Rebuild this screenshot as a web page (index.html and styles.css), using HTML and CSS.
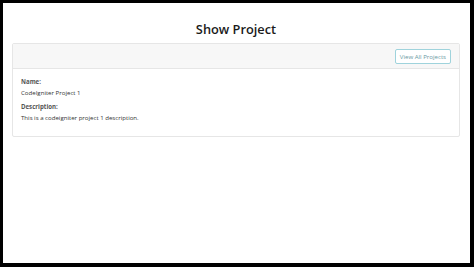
FILE: index.html
```html
<!DOCTYPE html>
<html>
<head>
<meta charset="utf-8">
<link rel="stylesheet" href="styles.css">
</head>
<body>
<div class="frame">
  <h2 class="title">Show Project</h2>
  <div class="card">
    <div class="card-header">
      <a class="btn-outline" href="#">View All Projects</a>
    </div>
    <div class="card-body">
      <div class="field">
        <div class="label">Name:</div>
        <div class="value">CodeIgniter Project 1</div>
      </div>
      <div class="field">
        <div class="label">Description:</div>
        <div class="value">This is a codeigniter project 1 description.</div>
      </div>
    </div>
  </div>
</div>
</body>
</html>
```
FILE: styles.css
```css
html, body {
  margin: 0;
  padding: 0;
  background: #000;
}
.frame {
  box-sizing: border-box;
  width: 474px;
  height: 267px;
  border-style: solid;
  border-color: #000;
  border-width: 3px 4px 4px 3px;
  background: #fff;
  padding: 0 10px 0 9px;
  font-family: "Open Sans", "Noto Sans", sans-serif;
  color: #212529;
}
.title {
  margin: 0;
  padding-top: 17px;
  height: 23px;
  text-align: center;
  font-size: 12.8px;
  font-weight: 600;
  line-height: 18px;
  color: #1a1a1a;
}
.card {
  border: 1px solid #e6e6e6;
  border-radius: 2px;
}
.card-header {
  background: #f7f7f7;
  border-bottom: 1px solid #e6e6e6;
  padding: 5px 8px 4px;
  display: flex;
  justify-content: flex-end;
}
.btn-outline {
  display: block;
  border: 1px solid #9fd3dc;
  border-radius: 2px;
  color: #6a9aa3;
  font-size: 6.1px;
  line-height: 13px;
  padding: 0 4px;
  text-decoration: none;
  background: #fff;
}
.card-body {
  padding: 8px 8px 13px;
  display: flex;
  flex-direction: column;
  gap: 4px;
}
.field {
  font-size: 6.1px;
  line-height: 10.5px;
  color: #333;
}
.label {
  font-weight: 700;
  color: #555;
}
```
